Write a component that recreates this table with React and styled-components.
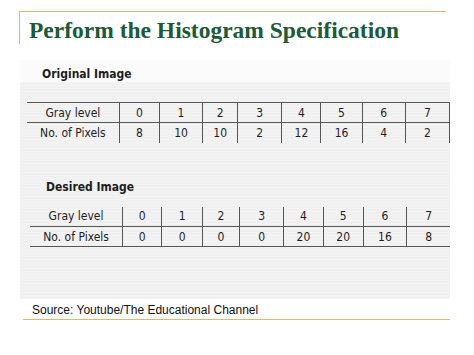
import React from "react";
import styled, { createGlobalStyle } from "styled-components";

const Global = createGlobalStyle`
  html, body { margin: 0; padding: 0; background: #ffffff; }
  body { width: 474px; height: 355px; overflow: hidden; }
`;

const Slide = styled.div`
  padding-top: 11px;
  display: flex;
  flex-direction: column;
`;

const Header = styled.header`
  margin-left: 19px;
  width: 427px;
  height: 33px;
  border-top: 1px solid #d4bd6c;
  border-left: 1px solid #d4bd6c;
  box-sizing: border-box;
  display: flex;
  align-items: flex-start;
`;

const Title = styled.h1`
  margin: 6px 0 0 9px;
  font-family: "Liberation Serif", "Times New Roman", serif;
  font-weight: bold;
  font-size: 23.5px;
  line-height: 25px;
  color: #1c5a38;
  white-space: nowrap;
`;

const Figure = styled.section`
  margin-top: 16px;
  margin-left: 20px;
  width: 430px;
  display: flex;
  flex-direction: column;
`;

const TopStrip = styled.div`
  height: 22px;
  background: #fbfbfb;
  display: flex;
  align-items: flex-end;
`;

const Panel = styled.div`
  height: 217px;
  background-color: #f0f0f0;
  background-image: repeating-linear-gradient(
    to bottom,
    rgba(255, 255, 255, 0.22) 0px,
    rgba(255, 255, 255, 0.22) 1px,
    rgba(0, 0, 0, 0) 1px,
    rgba(0, 0, 0, 0) 3px
  );
  display: flex;
  flex-direction: column;
`;

const Label = styled.div`
  font-family: "DejaVu Sans Condensed", "DejaVu Sans", Verdana, sans-serif;
  font-weight: bold;
  font-size: 12px;
  line-height: 14px;
  color: #1e1e1e;
  padding-left: ${(p) => p.$indent}px;
  margin-top: ${(p) => p.$top || 0}px;
  margin-bottom: ${(p) => p.$bottom || 0}px;
`;

const Table = styled.table`
  border-collapse: collapse;
  table-layout: fixed;
  margin-left: ${(p) => p.$left}px;
  margin-top: ${(p) => p.$top}px;
  font-family: "DejaVu Sans Condensed", "DejaVu Sans", Verdana, sans-serif;
  font-size: 12px;
  color: #1e1e1e;
`;

const Cell = styled.td`
  padding: 0;
  text-align: center;
  height: ${(p) => p.$h}px;
  box-sizing: border-box;
  border-left: ${(p) => (p.$first ? "none" : "1px solid #555")};
  border-right: ${(p) => (p.$closeRight ? "1px solid #555" : "none")};
  border-top: ${(p) => (p.$lineTop ? "1px solid #555" : "none")};
  border-bottom: ${(p) => (p.$lineBottom ? "1px solid #555" : "none")};
`;

const Source = styled.div`
  margin-left: 32px;
  margin-top: 4px;
  font-family: "Liberation Sans", Arial, sans-serif;
  font-size: 12px;
  line-height: 14px;
  color: #111;
`;

const Rule = styled.div`
  margin-left: 23px;
  margin-top: 2px;
  width: 427px;
  height: 1px;
  background: #d4bd6c;
`;

const DataTable = ({ widths, rows, left, top, closed }) => (
  <Table $left={left} $top={top}>
    <colgroup>
      {widths.map((w, i) => (
        <col key={i} style={{ width: w }} />
      ))}
    </colgroup>
    <tbody>
      {rows.map((row, r) => (
        <tr key={r}>
          {row.map((v, c) => (
            <Cell
              key={c}
              $h={20}
              $first={c === 0}
              $closeRight={closed && c === row.length - 1}
              $lineTop={closed && r === 0}
              $lineBottom={closed ? r === 0 : true}
            >
              {v}
            </Cell>
          ))}
        </tr>
      ))}
    </tbody>
  </Table>
);

export default function App() {
  return (
    <>
      <Global />
      <Slide>
        <Header>
          <Title>Perform the Histogram Specification</Title>
        </Header>
        <Figure>
          <TopStrip>
            <Label $indent={22} $bottom={1}>Original Image</Label>
          </TopStrip>
          <Panel>
            <DataTable
              closed
              left={7}
              top={20}
              widths={[92, 40, 43, 35, 44, 39, 41, 43, 44]}
              rows={[
                ["Gray level", "0", "1", "2", "3", "4", "5", "6", "7"],
                ["No. of Pixels", "8", "10", "10", "2", "12", "16", "4", "2"],
              ]}
            />
            <Label $indent={26} $top={37}>Desired Image</Label>
            <DataTable
              left={10}
              top={13}
              widths={[92, 39, 40, 37, 44, 39, 40, 43, 43]}
              rows={[
                ["Gray level", "0", "1", "2", "3", "4", "5", "6", "7"],
                ["No. of Pixels", "0", "0", "0", "0", "20", "20", "16", "8"],
              ]}
            />
          </Panel>
        </Figure>
        <Source>Source: Youtube/The Educational Channel</Source>
        <Rule />
      </Slide>
    </>
  );
}
